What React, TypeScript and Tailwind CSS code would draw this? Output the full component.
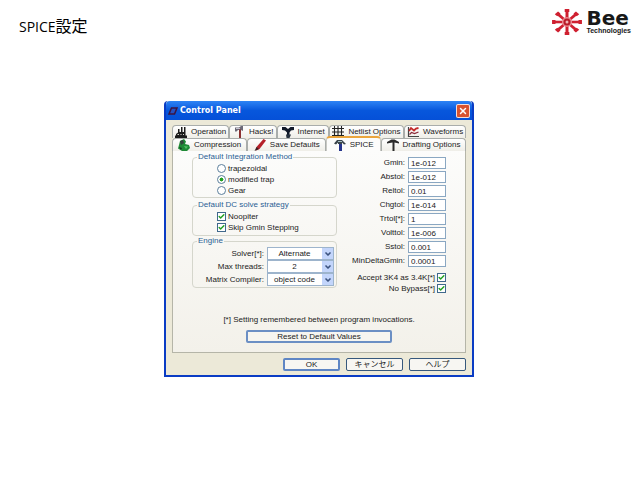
import React from 'react';
import { ChevronDown, Check, X } from 'lucide-react';

const FactoryIcon = () => (
  <svg viewBox="0 0 12 12" className="h-3 w-3 shrink-0">
    <path d="M1 11V8l2-1.500V3h1.500v3H6V1h1.500v5H9V1h1.500v10z" fill="#1c1c1c" />
    <path d="M0 9.500h12V12H0z" fill="#1c1c1c" />
    <path d="M2.500 8.500H4M5.500 8.500h1M8 8.500h1" stroke="#d8d8d0" />
  </svg>
);

const HammerIcon = () => (
  <svg viewBox="0 0 12 12" className="h-3 w-3 shrink-0">
    <path d="M2 1.500h4l2-1.500h2v5L8 4H5L3.500 5.500H2z" fill="#6d6a76" />
    <path d="M3 2.500h4" stroke="#c9c7d2" />
    <path d="M7 3.500V12" stroke="#8b3030" strokeWidth="2" />
  </svg>
);

const PlugIcon = () => (
  <svg viewBox="0 0 12 12" className="h-3 w-3 shrink-0">
    <path d="M0 1h3.500L6 3l2.500-2H12v3L9 4.500 7.500 6.500V9H5V6.500L3 4.500 0 4z" fill="#101828" />
    <path d="M4 8.500h5L7.500 12h-3z" fill="#27313f" />
  </svg>
);

const GridIcon = () => (
  <svg viewBox="0 0 12 12" className="h-3 w-3 shrink-0">
    <path d="M2.500 0v12M6 0v12M9.500 0v12M0 2.500h12M0 6h12M0 9.500h12" stroke="#222" strokeWidth="1.1" />
  </svg>
);

const WaveIcon = () => (
  <svg viewBox="0 0 12 12" className="h-3 w-3 shrink-0">
    <path d="M1.500 1v9.500H12" stroke="#444" fill="none" strokeWidth="1.2" />
    <path d="M2 5l2-3 3 2.500 2-2 2.500-.5" stroke="#c22a2a" fill="none" strokeWidth="1.800" />
    <path d="M2.500 8.500l2-2 3 1 4-1.500" stroke="#8a2a3a" fill="none" strokeWidth="1.200" />
  </svg>
);

const CompressIcon = () => (
  <svg viewBox="0 0 12 12" className="h-3 w-3 shrink-0">
    <path d="M2 2l4-2 2 2.500L7 5l4 1 1 3-3 3H4L0 9.500 1 6z" fill="#1f8a36" />
    <path d="M2 2l3-1 1 3-3 2z" fill="#35453c" />
    <path d="M6 7l4 .5L8 10z" fill="#4fc463" />
    <path d="M1 8l3 1-1 2z" fill="#123a1c" />
  </svg>
);

const PenIcon = () => (
  <svg viewBox="0 0 12 12" className="h-3 w-3 shrink-0">
    <path d="M9.500 0L12 1.500 5.500 10 2 11.500 2.500 8z" fill="#b5202a" />
    <path d="M2.500 8l2.500 2-4.500 2z" fill="#3a2024" />
  </svg>
);

const SpiceIcon = () => (
  <svg viewBox="0 0 12 12" className="h-3 w-3 shrink-0">
    <path d="M0 4.500L3 1h5l4 4-2 .5-2-2v1.500H4V3.500L2 5.500z" fill="#3b464c" />
    <path d="M4 2.500h4" stroke="#a7c0c5" />
    <path d="M5 5h3v7H5z" fill="#26358c" />
  </svg>
);

const DraftIcon = () => (
  <svg viewBox="0 0 12 12" className="h-3 w-3 shrink-0">
    <path d="M0 3l4.500-2.500h3L12 3v1.500L7.500 3.500V12h-2V3.500L0 4.500z" fill="#2b2b2b" />
  </svg>
);

const upperTabs = [
  { name: 'Operation', icon: FactoryIcon, width: 'grow-[57]' },
  { name: 'Hacks!', icon: HammerIcon, width: 'grow-[48]' },
  { name: 'Internet', icon: PlugIcon, width: 'grow-[51]' },
  { name: 'Netlist Options', icon: GridIcon, width: 'grow-[76]' },
  { name: 'Waveforms', icon: WaveIcon, width: 'grow-[62]' },
];

const lowerTabs = [
  { name: 'Compression', icon: CompressIcon, width: 'grow-[75]' },
  { name: 'Save Defaults', icon: PenIcon, width: 'grow-[79]' },
  { name: 'SPICE', icon: SpiceIcon, width: 'grow-[54]' },
  { name: 'Drafting Options', icon: DraftIcon, width: 'grow-[85]' },
];

const methods = ['trapezoidal', 'modified trap', 'Gear'];
const strategies = ['Noopiter', 'Skip Gmin Stepping'];

const engine = [
  { id: 'solver', name: 'Solver[*]:', value: 'Alternate' },
  { id: 'threads', name: 'Max threads:', value: '2' },
  { id: 'compiler', name: 'Matrix Compiler:', value: 'object code' },
];

const tolerances = [
  { name: 'Gmin:', value: '1e-012' },
  { name: 'Abstol:', value: '1e-012' },
  { name: 'Reltol:', value: '0.01' },
  { name: 'Chgtol:', value: '1e-014' },
  { name: 'Trtol[*]:', value: '1' },
  { name: 'Volttol:', value: '1e-006' },
  { name: 'Sstol:', value: '0.001' },
  { name: 'MinDeltaGmin:', value: '0.0001' },
];

const flags = ['Accept 3K4 as 3.4K[*]', 'No Bypass[*]'];

const Tab = ({ name, icon: Icon, width }: { name: string; icon: React.FC; width: string }) => {
  const selected = name === 'SPICE';
  return (
    <button
      role="tab"
      aria-selected={selected}
      className={`flex basis-0 items-center justify-center gap-1 whitespace-nowrap rounded-t-sm border border-b-0 ${width} ${
        selected
          ? '-mt-0.5 h-[15px] border-[#c9c9c4] border-t-2 border-t-[#eba53c] bg-[#fcfcfb]'
          : 'h-[13px] border-[#a9adab] bg-linear-to-b from-white to-[#efeee8]'
      }`}
    >
      <Icon />
      {name}
    </button>
  );
};

const CheckBox = ({ id }: { id: string }) => (
  <span className="relative flex h-[9px] w-[9px] shrink-0">
    <input
      id={id}
      type="checkbox"
      defaultChecked
      className="h-full w-full appearance-none border border-[#40698c] bg-white"
    />
    <Check className="pointer-events-none absolute inset-px h-[7px] w-[7px] text-[#21a121]" strokeWidth={5} />
  </span>
);

const Group = ({ title, className, children }: { title: string; className: string; children: React.ReactNode }) => (
  <fieldset className="rounded-sm border border-[#d5d6cc]">
    <legend className="ml-1 px-px leading-[8px] text-[#2b5f94]">{title}</legend>
    <div className={className}>{children}</div>
  </fieldset>
);

const BeeLogo = () => (
  <div className="flex items-start gap-[3px]">
    <svg viewBox="0 0 32 28" className="h-7 w-8">
      {[0, 45, 90, 135, 180, 225, 270, 315].map((angle) => (
        <g key={angle} transform={`translate(16 14) scale(1.150 1) rotate(${angle})`}>
          <path d="M0-4V-12" stroke="#cf2030" strokeWidth="2.600" />
          <path d="M-2-13h4v3h-4z" fill="#cf2030" />
        </g>
      ))}
      <circle cx="16" cy="14" r="5" fill="#e8828a" />
      <circle cx="16" cy="14" r="3.500" fill="#b81c2a" />
      <circle cx="16" cy="14" r="1.500" fill="#f0b4b4" />
    </svg>
    <div className="pt-px font-['DejaVu_Sans'] font-bold text-[#181818]">
      <div className="text-[20px] leading-[18px]">Bee</div>
      <div className="font-['Liberation_Sans'] text-[7px] leading-[7px]">Technologies</div>
    </div>
  </div>
);

const App: React.FC = () => {
  return (
    <div className="min-h-screen bg-white font-['Liberation_Sans','Noto_Sans_CJK_JP',sans-serif] text-[8px] leading-[10px] text-[#222]">
      {/* Slide header */}
      <header className="flex items-start justify-between pl-[19px] pr-[7px] pt-2">
        <h1 className="pt-1.5 font-['Open_Sans','Noto_Sans_CJK_JP',sans-serif] text-[14px] leading-[24px] text-black">
          SPICE<span className="text-[16px]">設定</span>
        </h1>
        <BeeLogo />
      </header>

      {/* Control panel window */}
      <main className="mx-auto mt-[62px] max-w-[310px] rounded-t-sm border-2 border-t-0 border-[#0a3cc4] bg-[#ece9d8]">
        <div className="flex h-[19px] items-center gap-0.5 rounded-t-sm bg-linear-to-b from-[#2d83f5] via-[#0757dc] to-[#0550d8] px-0.5">
          <svg viewBox="0 0 10 10" className="h-2.5 w-2.5">
            <path d="M3.500 2H9L6.500 8H1z" fill="#2450c0" stroke="#3d1440" strokeWidth="1.500" />
          </svg>
          <h2 className="grow font-['DejaVu_Sans'] text-[8px] font-bold text-white">Control Panel</h2>
          <button
            aria-label="Close"
            className="flex h-3.5 w-3.5 items-center justify-center rounded-xs border border-white/80 bg-[#d9532f] text-white"
          >
            <X className="h-2.5 w-2.5" strokeWidth={3.5} />
          </button>
        </div>

        <div className="px-1.5 pb-1 pt-[5px]">
          <div role="tablist">
            <div className="flex">
              {upperTabs.map((tab) => (
                <Tab key={tab.name} {...tab} />
              ))}
            </div>
            <div className="flex">
              {lowerTabs.map((tab) => (
                <Tab key={tab.name} {...tab} />
              ))}
            </div>
          </div>

          <div className="border border-t-0 border-[#b5b5a8] bg-linear-to-b from-[#fcfcfb] to-[#f3f1ea] pb-[9px] pt-0.5">
            <div className="flex justify-between pl-[19px] pr-[19px]">
              {/* Left column */}
              <div className="w-[145px]">
                <Group title="Default Integration Method" className="pb-px pl-6 pt-0.5">
                  {methods.map((method) => (
                    <label key={method} className="flex h-[11px] items-center gap-0.5">
                      <input
                        type="radio"
                        name="method"
                        defaultChecked={method === 'modified trap'}
                        className="h-[9px] w-[9px] appearance-none rounded-full border border-[#5c7f9c] bg-white checked:bg-radial checked:from-[#21a121] checked:from-35% checked:to-white checked:to-45%"
                      />
                      {method}
                    </label>
                  ))}
                </Group>
                <div className="h-[3px]" />
                <Group title="Default DC solve strategy" className="pb-0.5 pl-6 pt-0.5">
                  {strategies.map((strategy) => (
                    <div key={strategy} className="flex h-[11px] items-center gap-0.5">
                      <CheckBox id={strategy} />
                      <label htmlFor={strategy}>{strategy}</label>
                    </div>
                  ))}
                </Group>
                <div className="h-px" />
                <Group title="Engine" className="pb-px pr-0.5 pt-0.5">
                  {engine.map((item) => (
                    <div key={item.id} className="flex h-[13px] items-center justify-end gap-[3px]">
                      <label htmlFor={item.id}>{item.name}</label>
                      <span className="relative h-[13px] w-[67px]">
                        <select
                          id={item.id}
                          className="block h-full w-full appearance-none border border-[#9db4cc] bg-white pr-3 text-center"
                        >
                          <option>{item.value}</option>
                        </select>
                        <span className="pointer-events-none absolute inset-y-px right-px flex w-[11px] items-center justify-center bg-[#c3d5fb] text-[#3c5380]">
                          <ChevronDown className="h-2 w-2" strokeWidth={5} />
                        </span>
                      </span>
                    </div>
                  ))}
                </Group>
              </div>

              {/* Right column */}
              <div className="flex flex-col items-end gap-0.5 pt-1">
                {tolerances.map((item) => (
                  <div key={item.name} className="flex h-3 items-center gap-[3px]">
                    <label htmlFor={item.name}>{item.name}</label>
                    <input
                      id={item.name}
                      defaultValue={item.value}
                      className="h-3 w-[38px] border border-[#8aa7c2] bg-white px-0.5"
                    />
                  </div>
                ))}
                <div className="mt-[3px] flex flex-col items-end">
                  {flags.map((flag) => (
                    <div key={flag} className="flex h-[11px] items-center gap-0.5">
                      <label htmlFor={flag}>{flag}</label>
                      <CheckBox id={flag} />
                    </div>
                  ))}
                </div>
              </div>
            </div>

            <p className="mt-[21px] text-center">[*] Setting remembered between program invocations.</p>
            <button className="mx-auto mt-[5px] block h-[13px] w-1/2 rounded-xs border-2 border-[#6b8fc4] bg-[#f6f5f0] leading-[9px]">
              Reset to Default Values
            </button>
          </div>

          <div className="mt-[5px] flex justify-end gap-1.5">
            <button className="h-[13px] w-[57px] rounded-xs border-2 border-[#5f86c4] bg-[#f7f6f2] leading-[9px]">OK</button>
            <button className="h-[13px] w-[57px] rounded-xs border border-[#36587c] bg-[#f7f6f2]">キャンセル</button>
            <button className="h-[13px] w-[57px] rounded-xs border border-[#36587c] bg-[#f7f6f2]">ヘルプ</button>
          </div>
        </div>
      </main>
    </div>
  );
};

export default App;
